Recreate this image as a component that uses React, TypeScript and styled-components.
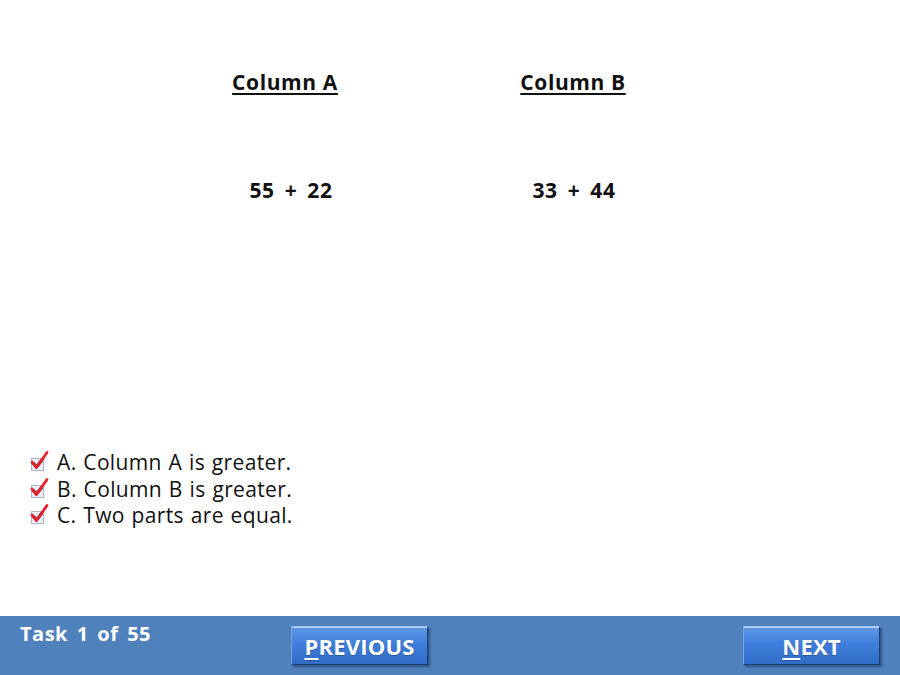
import React from "react";
import styled, { createGlobalStyle } from "styled-components";

const GlobalStyle = createGlobalStyle`
  html, body {
    margin: 0;
    padding: 0;
    background: #ffffff;
  }
  body {
    font-family: "Open Sans", "Noto Sans CJK KR", sans-serif;
    color: #111;
  }
`;

const Page = styled.div`
  width: 900px;
  height: 675px;
  display: flex;
  flex-direction: column;
  overflow: hidden;
`;

const Content = styled.main`
  flex: 1;
  display: flex;
  flex-direction: column;
`;

const Columns = styled.div`
  display: grid;
  grid-template-columns: 288px 288px;
  padding: 69px 0 0 141px;
`;

const Column = styled.div`
  display: flex;
  flex-direction: column;
  align-items: center;
  gap: 82px;
`;

const Heading = styled.div`
  font-size: 21px;
  font-weight: 700;
  line-height: 26px;
  letter-spacing: 0.6px;
  text-decoration: underline;
  text-underline-offset: 3px;
  text-decoration-thickness: 2px;
`;

const Expr = styled.div<{ $indent?: number }>`
  font-size: 21px;
  font-weight: 700;
  line-height: 26px;
  letter-spacing: 0.6px;
  word-spacing: 4px;
  padding-left: ${(p) => p.$indent ?? 0}px;
`;

const Options = styled.ul`
  list-style: none;
  margin: 246px 0 0 0;
  padding: 0 0 0 29px;
  display: flex;
  flex-direction: column;
`;

const Option = styled.li`
  display: flex;
  align-items: center;
  gap: 7px;
  height: 26.5px;
  font-size: 21px;
  line-height: 26px;
  letter-spacing: 0.35px;
  word-spacing: 1px;
`;

const Footer = styled.footer`
  height: 59px;
  background: #4f81bd;
  display: flex;
  align-items: flex-start;
  padding: 0 20px;
  box-sizing: border-box;
`;

const TaskLabel = styled.div`
  color: #ffffff;
  font-size: 20px;
  font-weight: 700;
  line-height: 24px;
  letter-spacing: 0.5px;
  word-spacing: 3px;
  margin-top: 6px;
  width: 271px;
`;

const NavButton = styled.button<{ $push?: boolean }>`
  margin-top: 10px;
  margin-left: ${(p) => (p.$push ? "auto" : "0")};
  width: 137px;
  height: 39px;
  border: 1px solid #1f3f73;
  border-top-color: #a8c6f2;
  border-left-color: #7aa2dc;
  background: linear-gradient(#5f98e6 0%, #3f7fdc 45%, #2f6cc6 100%);
  box-shadow: inset 0 1px 0 rgba(255, 255, 255, 0.55), 2px 2px 2px rgba(20, 40, 80, 0.5);
  color: #ffffff;
  font-family: "Open Sans", sans-serif;
  font-size: 22px;
  font-weight: 700;
  letter-spacing: 0.2px;
  padding: 0;
  text-shadow: 0 1px 1px rgba(0, 0, 0, 0.25);
  u {
    text-underline-offset: 3px;
  }
`;

const CheckIcon = () => (
  <svg width="21" height="24" viewBox="0 0 21 24">
    <rect x="2.5" y="8.5" width="12" height="12" fill="#e9eef7" stroke="#aab6cc" />
    <path d="M4 13 L7.5 17 L13 10" stroke="#2b2b33" strokeWidth="3" fill="none" />
    <path d="M3 12 L7.5 17.5 L18 2.5" stroke="#e8202b" strokeWidth="2.8" fill="none" strokeLinecap="round" strokeLinejoin="round" />
  </svg>
);

const options = [
  "A. Column A is greater.",
  "B. Column B is greater.",
  "C. Two parts are equal.",
];

export default function App() {
  return (
    <>
      <GlobalStyle />
      <Page>
        <Content>
          <Columns>
            <Column>
              <Heading>Column A</Heading>
              <Expr $indent={12}>55 + 22</Expr>
            </Column>
            <Column>
              <Heading>Column B</Heading>
              <Expr $indent={2}>33 + 44</Expr>
            </Column>
          </Columns>
          <Options>
            {options.map((o) => (
              <Option key={o}>
                <CheckIcon />
                {o}
              </Option>
            ))}
          </Options>
        </Content>
        <Footer>
          <TaskLabel>Task 1 of 55</TaskLabel>
          <NavButton>
            <u>P</u>REVIOUS
          </NavButton>
          <NavButton $push>
            <u>N</u>EXT
          </NavButton>
        </Footer>
      </Page>
    </>
  );
}
